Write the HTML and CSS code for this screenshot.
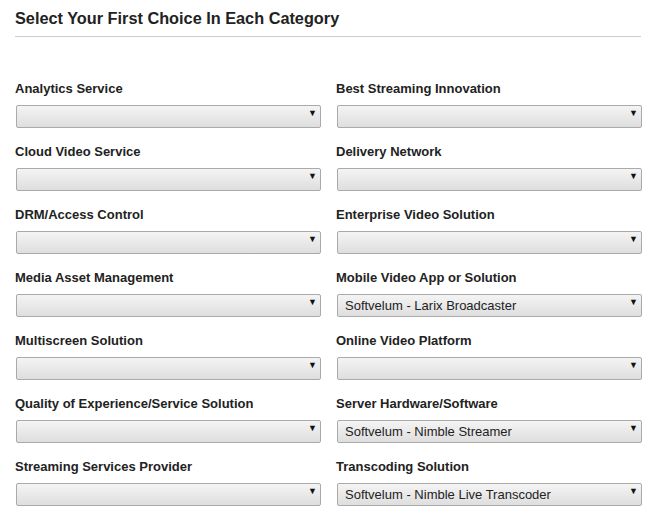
FILE: index.html
```html
<!DOCTYPE html>
<html>
<head>
<meta charset="utf-8">
<link rel="stylesheet" href="styles.css">
</head>
<body>
<div class="page">
  <h2 class="title">Select Your First Choice In Each Category</h2>
  <div class="grid">
    <div class="field"><div class="label">Analytics Service</div><div class="select"><span></span></div></div>
    <div class="field"><div class="label">Best Streaming Innovation</div><div class="select"><span></span></div></div>
    <div class="field"><div class="label">Cloud Video Service</div><div class="select"><span></span></div></div>
    <div class="field"><div class="label">Delivery Network</div><div class="select"><span></span></div></div>
    <div class="field"><div class="label">DRM/Access Control</div><div class="select"><span></span></div></div>
    <div class="field"><div class="label">Enterprise Video Solution</div><div class="select"><span></span></div></div>
    <div class="field"><div class="label">Media Asset Management</div><div class="select"><span></span></div></div>
    <div class="field"><div class="label">Mobile Video App or Solution</div><div class="select"><span>Softvelum - Larix Broadcaster</span></div></div>
    <div class="field"><div class="label">Multiscreen Solution</div><div class="select"><span></span></div></div>
    <div class="field"><div class="label">Online Video Platform</div><div class="select"><span></span></div></div>
    <div class="field"><div class="label">Quality of Experience/Service Solution</div><div class="select"><span></span></div></div>
    <div class="field"><div class="label">Server Hardware/Software</div><div class="select"><span>Softvelum - Nimble Streamer</span></div></div>
    <div class="field"><div class="label">Streaming Services Provider</div><div class="select"><span></span></div></div>
    <div class="field"><div class="label">Transcoding Solution</div><div class="select"><span>Softvelum - Nimble Live Transcoder</span></div></div>
  </div>
</div>
</body>
</html>
```

FILE: styles.css
```css
html, body {
  margin: 0;
  padding: 0;
  background: #ffffff;
}
body {
  font-family: "Liberation Sans", Arial, sans-serif;
  color: #222222;
}
.page {
  padding: 0 13px 0 15px;
}
.title {
  margin: 0;
  padding-top: 9px;
  padding-bottom: 8px;
  font-size: 16.3px;
  line-height: 19px;
  font-weight: bold;
  color: #222222;
  border-bottom: 1px solid #cccccc;
}
.grid {
  display: grid;
  grid-template-columns: 306px 306px;
  column-gap: 15px;
  row-gap: 16px;
  padding-top: 44px;
}
.field {
  display: flex;
  flex-direction: column;
}
.label {
  font-size: 13px;
  line-height: 16px;
  font-weight: bold;
  color: #222222;
  margin-bottom: 8px;
}
.select {
  position: relative;
  margin-left: 1px;
  height: 21px;
  border: 1px solid #aaaaaa;
  border-radius: 2px;
  background: linear-gradient(#f4f4f4, #dedede);
  font-size: 13px;
  line-height: 21px;
  color: #222222;
  padding-left: 7px;
}
.select::after {
  content: "\25BC";
  position: absolute;
  right: 3px;
  top: 0;
  font-size: 9px;
  line-height: 15px;
  color: #111111;
}
```
